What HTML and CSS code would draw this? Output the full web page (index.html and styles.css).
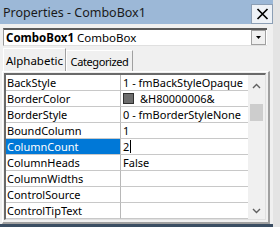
FILE: index.html
```html
<!DOCTYPE html>
<html lang="en">
<head>
    <meta charset="UTF-8">
    <title>Properties - ComboBox1</title>
    <link rel="stylesheet" href="styles.css">
</head>
<body>
    <div class="window">
        <div class="titlebar">
            <span class="title">Properties - ComboBox1</span>
            <div class="close">
                <svg width="13" height="12" viewBox="0 0 13 12"><path d="M1.5 1 L11.5 11 M11.5 1 L1.5 11" stroke="#000" stroke-width="1.7"/></svg>
            </div>
        </div>

        <div class="combo">
            <span class="combo-text"><b>ComboBox1</b> ComboBox</span>
            <div class="combo-btn">
                <svg width="5" height="3" viewBox="0 0 5 3"><path d="M0 0 H5 L2.5 3 Z" fill="#000"/></svg>
            </div>
        </div>

        <div class="tabs">
            <div class="tab active">Alphabetic</div>
            <div class="tab cat">Categorized</div>
        </div>

        <div class="panel">
            <div class="grid">
                <div class="rows">
                    <div class="row"><div class="name">BackStyle</div><div class="value">1 - fmBackStyleOpaque</div></div>
                    <div class="row"><div class="name">BorderColor</div><div class="value"><span class="swatch"></span>&amp;H80000006&amp;</div></div>
                    <div class="row"><div class="name">BorderStyle</div><div class="value">0 - fmBorderStyleNone</div></div>
                    <div class="row"><div class="name">BoundColumn</div><div class="value">1</div></div>
                    <div class="row selected"><div class="name">ColumnCount</div><div class="value">2<span class="caret"></span></div></div>
                    <div class="row"><div class="name">ColumnHeads</div><div class="value">False</div></div>
                    <div class="row"><div class="name">ColumnWidths</div><div class="value"></div></div>
                    <div class="row"><div class="name">ControlSource</div><div class="value"></div></div>
                    <div class="row"><div class="name">ControlTipText</div><div class="value"></div></div>
                </div>
                <div class="scrollbar">
                    <svg class="arrow up" width="9" height="6" viewBox="0 0 9 6"><path d="M1 5 L4.5 1.5 L8 5" fill="none" stroke="#606060" stroke-width="1.4"/></svg>
                    <div class="track">
                        <div class="thumb"></div>
                    </div>
                    <svg class="arrow down" width="9" height="6" viewBox="0 0 9 6"><path d="M1 1 L4.5 4.5 L8 1" fill="none" stroke="#606060" stroke-width="1.4"/></svg>
                </div>
            </div>
        </div>
        <div class="bottom"></div>
    </div>
</body>
</html>
```

FILE: styles.css
```css
body {
    margin: 0;
    background: #e9e9e9;
    font-family: "Noto Sans", "DejaVu Sans", sans-serif;
}
.window {
    width: 273px;
    height: 227px;
    background: #f0f0f0;
    border-right: 7px solid #e4e4e4;
    display: flex;
    flex-direction: column;
}
.titlebar {
    height: 27px;
    background: #9cb8d7;
    display: flex;
    align-items: center;
    justify-content: space-between;
    padding-left: 3px;
    box-sizing: border-box;
}
.title {
    font-size: 12.5px;
    color: #1a1a1a;
}
.close {
    width: 20px;
    height: 18px;
    margin-top: 4px;
    margin-right: 0;
    background: #eef2f7;
    border: 1px solid #8c9fb5;
    display: flex;
    align-items: center;
    justify-content: center;
}
.combo {
    margin: 4px 6px 0 3px;
    height: 17px;
    background: #fff;
    border-top: 2px solid #5a5a5a;
    border-left: 1px solid #9a9a9a;
    border-bottom: 1px solid #e0e0e0;
    display: flex;
    align-items: center;
    justify-content: space-between;
}
.combo-text {
    font-size: 11.5px;
    padding-left: 2px;
    color: #000;
}
.combo-btn {
    width: 13px;
    height: 13px;
    margin-right: 1px;
    background: #f0f0f0;
    border: 1px solid #a0a0a0;
    display: flex;
    align-items: center;
    justify-content: center;
}
.tabs {
    display: flex;
    height: 23px;
    margin-top: 2px;
    padding-left: 3px;
    align-items: flex-end;
}
.tab {
    font-size: 11px;
    line-height: 14px;
    height: 21px;
    box-sizing: border-box;
    padding-top: 4px;
    text-align: center;
    border-left: 1px solid #fff;
    border-right: 1px solid #a0a0a0;
    border-top: 1px solid #fff;
    color: #000;
}
.tab.active {
    width: 63px;
    height: 23px;
    padding-top: 5px;
    font-size: 11.5px;
}
.tab.cat {
    width: 67px;
    letter-spacing: -0.4px;
}
.panel {
    margin: 0 3px 0 2px;
    border-top: 1px solid #fff;
    border-left: 1px solid #fff;
    border-right: 2px solid #a0a0a0;
    border-bottom: 2px solid #a0a0a0;
    padding: 1px 2px 2px 1px;
    flex: 1;
}
.grid {
    display: flex;
    border-top: 2px solid #6a6a6a;
    border-left: 2px solid #6a6a6a;
    border-right: 1px solid #e0e0e0;
    border-bottom: 1px solid #e0e0e0;
    background: #fff;
    height: 144px;
}
.rows {
    flex: 1;
}
.row {
    display: flex;
    height: 16px;
    font-size: 11px;
    color: #000;
}
.name {
    width: 113px;
    padding-left: 1px;
    border-right: 1px solid #b8b8b8;
    border-bottom: 1px solid #c8c8c8;
    line-height: 15px;
}
.value {
    flex: 1;
    padding-left: 2px;
    border-bottom: 1px solid #c8c8c8;
    line-height: 15px;
    display: flex;
    align-items: center;
}
.row.selected .name {
    background: #0078d7;
    color: #fff;
}
.swatch {
    width: 9px;
    height: 9px;
    background: #6d6d6d;
    border: 1px solid #303030;
    margin-right: 6px;
}
.caret {
    width: 1px;
    height: 13px;
    background: #000;
    margin-left: 1px;
}
.scrollbar {
    width: 17px;
    background: #f0f0f0;
    display: flex;
    flex-direction: column;
    align-items: center;
}
.arrow.up {
    margin: 8px 0 0;
}
.arrow.down {
    margin: 0 0 5px;
}
.track {
    flex: 1;
    width: 100%;
}
.thumb {
    height: 17px;
    margin: 15px 2px 0;
    background: #cdcdcd;
}
.bottom {
    height: 3px;
    background: #3b4e63;
}
```
